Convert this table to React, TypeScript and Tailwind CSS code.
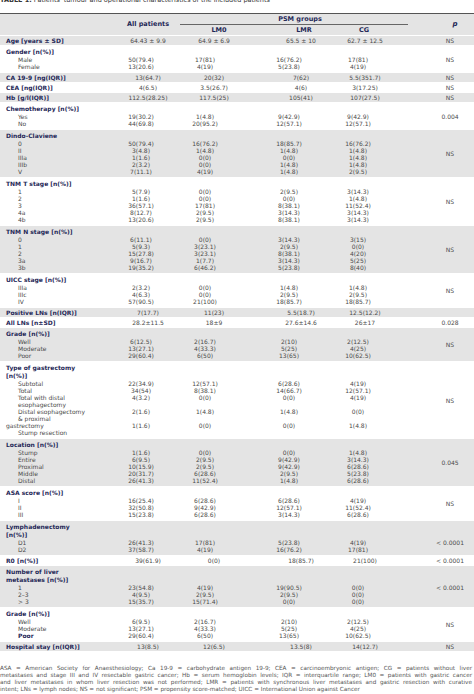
import React from 'react';

type Line = { label: string; vals?: string[]; flush?: boolean; bold?: boolean };
type Group = {
  kind: 'group';
  titles: string[];
  lines: Line[];
  p?: string;
  pAt?: 'first' | 'center';
};
type Single = { kind: 'single'; label: string; vals: string[]; p?: string };
type Row = Group | Single;

const COLS = 'grid grid-cols-[112px_72px_70px_80px_70px_70px]';
const SINGLE_POS = ['', 'pr-[10px]', 'pl-[14px]', 'pr-[8px]'];
const GROUP_POS = ['pr-[14px]', 'pr-[28px]', 'pr-[10px]', 'pr-[22px]'];

const rows: Row[] = [
  { kind: 'single', label: 'Age [years ± SD]', vals: ['64.43 ± 9.9', '64.9 ± 6.9', '65.5 ± 10', '62.7 ± 12.5'], p: 'NS' },
  {
    kind: 'group',
    titles: ['Gender [n(%)]'],
    lines: [
      { label: 'Male', vals: ['50(79.4)', '17(81)', '16(76.2)', '17(81)'] },
      { label: 'Female', vals: ['13(20.6)', '4(19)', '5(23.8)', '4(19)'] },
    ],
    p: 'NS',
    pAt: 'first',
  },
  { kind: 'single', label: 'CA 19-9 [ng(IQR)]', vals: ['13(64.7)', '20(32)', '7(62)', '5.5(351.7)'], p: 'NS' },
  { kind: 'single', label: 'CEA [ng(IQR)]', vals: ['4(6.5)', '3.5(26.7)', '4(6)', '3(17.25)'], p: 'NS' },
  { kind: 'single', label: 'Hb [g/l(IQR)]', vals: ['112.5(28.25)', '117.5(25)', '105(41)', '107(27.5)'], p: 'NS' },
  {
    kind: 'group',
    titles: ['Chemotherapy [n(%)]'],
    lines: [
      { label: 'Yes', vals: ['19(30.2)', '1(4.8)', '9(42.9)', '9(42.9)'] },
      { label: 'No', vals: ['44(69.8)', '20(95.2)', '12(57.1)', '12(57.1)'] },
    ],
    p: '0.004',
    pAt: 'first',
  },
  {
    kind: 'group',
    titles: ['Dindo-Claviene'],
    lines: [
      { label: '0', vals: ['50(79.4)', '16(76.2)', '18(85.7)', '16(76.2)'] },
      { label: 'II', vals: ['3(4.8)', '1(4.8)', '1(4.8)', '1(4.8)'] },
      { label: 'IIIa', vals: ['1(1.6)', '0(0)', '0(0)', '1(4.8)'] },
      { label: 'IIIb', vals: ['2(3.2)', '0(0)', '1(4.8)', '1(4.8)'] },
      { label: 'V', vals: ['7(11.1)', '4(19)', '1(4.8)', '2(9.5)'] },
    ],
    p: 'NS',
  },
  {
    kind: 'group',
    titles: ['TNM T stage [n(%)]'],
    lines: [
      { label: '1', vals: ['5(7.9)', '0(0)', '2(9.5)', '3(14.3)'] },
      { label: '2', vals: ['1(1.6)', '0(0)', '0(0)', '1(4.8)'] },
      { label: '3', vals: ['36(57.1)', '17(81)', '8(38.1)', '11(52.4)'] },
      { label: '4a', vals: ['8(12.7)', '2(9.5)', '3(14.3)', '3(14.3)'] },
      { label: '4b', vals: ['13(20.6)', '2(9.5)', '8(38.1)', '3(14.3)'] },
    ],
    p: 'NS',
  },
  {
    kind: 'group',
    titles: ['TNM N stage [n(%)]'],
    lines: [
      { label: '0', vals: ['6(11.1)', '0(0)', '3(14.3)', '3(15)'] },
      { label: '1', vals: ['5(9.3)', '3(23.1)', '2(9.5)', '0(0)'] },
      { label: '2', vals: ['15(27.8)', '3(23.1)', '8(38.1)', '4(20)'] },
      { label: '3a', vals: ['9(16.7)', '1(7.7)', '3(14.3)', '5(25)'] },
      { label: '3b', vals: ['19(35.2)', '6(46.2)', '5(23.8)', '8(40)'] },
    ],
    p: 'NS',
  },
  {
    kind: 'group',
    titles: ['UICC stage [n(%)]'],
    lines: [
      { label: 'IIIa', vals: ['2(3.2)', '0(0)', '1(4.8)', '1(4.8)'] },
      { label: 'IIIc', vals: ['4(6.3)', '0(0)', '2(9.5)', '2(9.5)'] },
      { label: 'IV', vals: ['57(90.5)', '21(100)', '18(85.7)', '18(85.7)'] },
    ],
    p: 'NS',
  },
  { kind: 'single', label: 'Positive LNs [n(IQR)]', vals: ['7(17.7)', '11(23)', '5.5(18.7)', '12.5(12.2)'] },
  { kind: 'single', label: 'All LNs [n±SD]', vals: ['28.2±11.5', '18±9', '27.6±14.6', '26±17'], p: '0.028' },
  {
    kind: 'group',
    titles: ['Grade [n(%)]'],
    lines: [
      { label: 'Well', vals: ['6(12.5)', '2(16.7)', '2(10)', '2(12.5)'] },
      { label: 'Moderate', vals: ['13(27.1)', '4(33.3)', '5(25)', '4(25)'] },
      { label: 'Poor', vals: ['29(60.4)', '6(50)', '13(65)', '10(62.5)'] },
    ],
    p: 'NS',
  },
  {
    kind: 'group',
    titles: ['Type of gastrectomy', '[n(%)]'],
    lines: [
      { label: 'Subtotal', vals: ['22(34.9)', '12(57.1)', '6(28.6)', '4(19)'] },
      { label: 'Total', vals: ['34(54)', '8(38.1)', '14(66.7)', '12(57.1)'] },
      { label: 'Total with distal', vals: ['4(3.2)', '0(0)', '0(0)', '4(19)'] },
      { label: 'esophagectomy' },
      { label: 'Distal esophagectomy', vals: ['2(1.6)', '1(4.8)', '1(4.8)', '0(0)'] },
      { label: '& proximal' },
      { label: 'gastrectomy', vals: ['1(1.6)', '0(0)', '0(0)', '1(4.8)'], flush: true },
      { label: 'Stump resection' },
    ],
    p: 'NS',
  },
  {
    kind: 'group',
    titles: ['Location [n(%)]'],
    lines: [
      { label: 'Stump', vals: ['1(1.6)', '0(0)', '0(0)', '1(4.8)'] },
      { label: 'Entire', vals: ['6(9.5)', '2(9.5)', '9(42.9)', '3(14.3)'] },
      { label: 'Proximal', vals: ['10(15.9)', '2(9.5)', '9(42.9)', '6(28.6)'] },
      { label: 'Middle', vals: ['20(31.7)', '6(28.6)', '2(9.5)', '5(23.8)'] },
      { label: 'Distal', vals: ['26(41.3)', '11(52.4)', '1(4.8)', '6(28.6)'] },
    ],
    p: '0.045',
  },
  {
    kind: 'group',
    titles: ['ASA score [n(%)]'],
    lines: [
      { label: 'I', vals: ['16(25.4)', '6(28.6)', '6(28.6)', '4(19)'] },
      { label: 'II', vals: ['32(50.8)', '9(42.9)', '12(57.1)', '11(52.4)'] },
      { label: 'III', vals: ['15(23.8)', '6(28.6)', '3(14.3)', '6(28.6)'] },
    ],
    p: 'NS',
  },
  {
    kind: 'group',
    titles: ['Lymphadenectomy', '[n(%)]'],
    lines: [
      { label: 'D1', vals: ['26(41.3)', '17(81)', '5(23.8)', '4(19)'] },
      { label: 'D2', vals: ['37(58.7)', '4(19)', '16(76.2)', '17(81)'] },
    ],
    p: '< 0.0001',
    pAt: 'first',
  },
  { kind: 'single', label: 'R0 [n(%)]', vals: ['39(61.9)', '0(0)', '18(85.7)', '21(100)'], p: '< 0.0001' },
  {
    kind: 'group',
    titles: ['Number of liver', 'metastases [n(%)]'],
    lines: [
      { label: '1', vals: ['23(54.8)', '4(19)', '19(90.5)', '0(0)'] },
      { label: '2–3', vals: ['4(9.5)', '2(9.5)', '2(9.5)', '0(0)'] },
      { label: '> 3', vals: ['15(35.7)', '15(71.4)', '0(0)', '0(0)'] },
    ],
    p: '< 0.0001',
    pAt: 'first',
  },
  {
    kind: 'group',
    titles: ['Grade [n(%)]'],
    lines: [
      { label: 'Well', vals: ['6(9.5)', '2(16.7)', '2(10)', '2(12.5)'] },
      { label: 'Moderate', vals: ['13(27.1)', '4(33.3)', '5(25)', '4(25)'] },
      { label: 'Poor', vals: ['29(60.4)', '6(50)', '13(65)', '10(62.5)'], bold: true },
    ],
    p: 'NS',
  },
  { kind: 'single', label: 'Hospital stay [n(IQR)]', vals: ['13(8.5)', '12(6.5)', '13.5(8)', '14(12.7)'], p: 'NS' },
];

const footnote = [
  'ASA = American Society for Anaesthesiology; Ca 19-9 = carbohydrate antigen 19-9; CEA = carcinoembryonic antigen; CG = patients without liver',
  'metastases and stage III and IV resectable gastric cancer; Hb = serum hemoglobin levels; IQR = interquartile range; LM0 = patients with gastric cancer',
  'and liver metastases in whom liver resection was not performed; LMR = patients with synchronous liver metastases and gastric resection with curative',
  'intent; LNs = lymph nodes; NS = not significant; PSM = propensity score-matched; UICC = International Union against Cancer',
];

function SingleRow({ row, gray }: { row: Single; gray: boolean }) {
  return (
    <div className={`${COLS} h-[10px] items-center border-b border-white ${gray ? 'bg-[#e4e4e4]' : ''}`}>
      <div className="pl-[6px] font-bold text-[#1f2857]">{row.label}</div>
      {row.vals.map((v, i) => (
        <div key={i} className={`text-center ${SINGLE_POS[i]}`}>
          {v}
        </div>
      ))}
      <div className="pl-[22px] text-center">{row.p}</div>
    </div>
  );
}

function GroupRow({ row, gray }: { row: Group; gray: boolean }) {
  const spacer = row.titles.map((_, i) => <div key={'t' + i} className="h-[8px]" />);
  return (
    <div className={`${COLS} border-b border-white pt-[2px] pb-[2px] ${gray ? 'bg-[#e4e4e4]' : ''}`}>
      <div>
        {row.titles.map((t) => (
          <div key={t} className="h-[8px] pl-[6px] font-bold text-[#1f2857]">
            {t}
          </div>
        ))}
        {row.lines.map((l, i) => (
          <div
            key={i}
            className={`h-[7px] ${l.flush ? 'pl-[6px]' : 'pl-[18px]'} ${l.bold ? 'font-bold text-[#1f2857]' : ''}`}
          >
            {l.label}
          </div>
        ))}
      </div>
      {[0, 1, 2, 3].map((c) => (
        <div key={c} className={`text-center ${GROUP_POS[c]}`}>
          {spacer}
          {row.lines.map((l, i) => (
            <div key={i} className="h-[7px]">
              {l.vals ? l.vals[c] : ''}
            </div>
          ))}
        </div>
      ))}
      {row.pAt === 'first' ? (
        <div className="pl-[22px] text-center">
          {spacer}
          <div className="h-[7px]">{row.p}</div>
        </div>
      ) : (
        <div className="flex items-center justify-center pl-[22px]">{row.p}</div>
      )}
    </div>
  );
}

export default function App() {
  return (
    <div className="h-[694px] w-[474px] overflow-hidden bg-white font-['DejaVu_Sans',sans-serif] text-[6px] leading-[7px] text-[#4a4a4a] whitespace-nowrap">
      <div className="-mt-[4px] h-[9px] text-[6.5px] leading-[9px] text-[#333]">
        <span className="font-bold">TABLE 1.</span> Patients' tumour and operational characteristics of the included patients
      </div>
      <div className="mt-[8px] border-t border-[#555]">
        <div className={`${COLS} h-[22px] border-b border-white bg-[#e4e4e4] font-bold text-[#1f2857]`}>
          <div />
          <div className="flex items-center justify-center text-[6.5px]">All patients</div>
          <div className="col-span-3 flex flex-col">
            <div className="mx-[-4px] mt-[2px] h-[7px] border-b border-[#666] pb-[8px] text-center text-[6.5px] leading-[7px]">
              <span className="relative left-[6px]">PSM groups</span>
            </div>
            <div className="grid grid-cols-[70px_80px_70px] pt-[2px] text-[6.5px]">
              <div className="text-center">LM0</div>
              <div className="pl-[20px] text-center">LMR</div>
              <div className="pr-[10px] text-center">CG</div>
            </div>
          </div>
          <div className="flex items-center justify-center pl-[32px] text-[7px] italic">p</div>
        </div>
        {rows.map((r, i) =>
          r.kind === 'single' ? (
            <SingleRow key={i} row={r} gray={i % 2 === 0} />
          ) : (
            <GroupRow key={i} row={r} gray={i % 2 === 0} />
          )
        )}
      </div>
      <div className="mt-[13px] w-[474px] text-[5.7px] leading-[7px] text-[#555]">
        {footnote.map((l, i) => (
          <div
            key={i}
            className={`w-[472px] whitespace-normal text-justify ${i < 3 ? '[text-align-last:justify]' : ''}`}
          >
            {l}
          </div>
        ))}
      </div>
    </div>
  );
}
